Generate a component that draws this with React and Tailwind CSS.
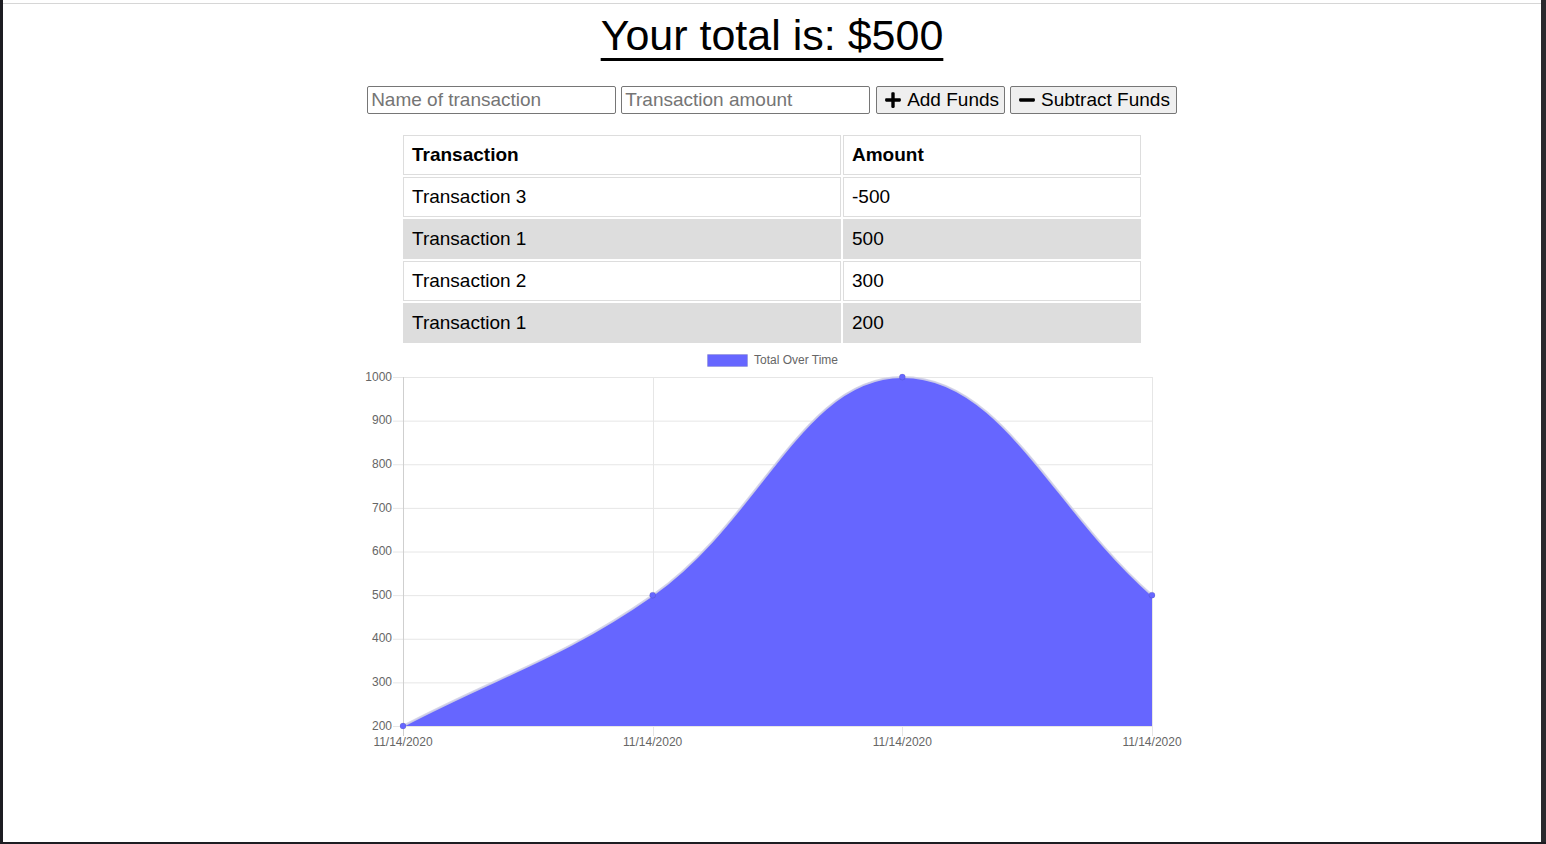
import { FaPlus, FaMinus } from 'react-icons/fa'

const font = { fontFamily: '"Liberation Sans", Arial, sans-serif' }

const transactions = [
  { name: 'Transaction 3', value: '-500' },
  { name: 'Transaction 1', value: '500' },
  { name: 'Transaction 2', value: '300' },
  { name: 'Transaction 1', value: '200' },
]

// chart geometry (svg coords)
const X0 = 48
const X1 = 797
const Y_TOP = 29
const Y_BOT = 378
const yFor = v => Y_BOT - ((v - 200) / 800) * (Y_BOT - Y_TOP)
const xFor = i => X0 + (i * (X1 - X0)) / 3

const values = [200, 500, 1000, 500]
const pts = values.map((v, i) => ({ x: xFor(i), y: yFor(v) }))

function spline(prev, cur, next, t) {
  const d01 = Math.hypot(cur.x - prev.x, cur.y - prev.y)
  const d12 = Math.hypot(next.x - cur.x, next.y - cur.y)
  let s01 = d01 / (d01 + d12)
  let s12 = d12 / (d01 + d12)
  s01 = isNaN(s01) ? 0 : s01
  s12 = isNaN(s12) ? 0 : s12
  const fa = t * s01
  const fb = t * s12
  return {
    prev: { x: cur.x - fa * (next.x - prev.x), y: cur.y - fa * (next.y - prev.y) },
    next: { x: cur.x + fb * (next.x - prev.x), y: cur.y + fb * (next.y - prev.y) },
  }
}

function curvePath() {
  const cps = pts.map((p, i) => spline(pts[i - 1] || p, p, pts[i + 1] || p, 0.4))
  let d = `M${pts[0].x},${pts[0].y}`
  for (let i = 1; i < pts.length; i++) {
    const a = cps[i - 1].next
    const b = cps[i].prev
    d += ` C${a.x},${a.y} ${b.x},${b.y} ${pts[i].x},${pts[i].y}`
  }
  return d
}

function Chart() {
  const line = curvePath()
  const ticks = [1000, 900, 800, 700, 600, 500, 400, 300, 200]
  return (
    <svg width="835" height="404" viewBox="0 0 835 404" className="block" style={font}>
      {/* legend */}
      <rect x="352.5" y="6.5" width="40" height="12" fill="#6666ff" stroke="rgba(0,0,0,0.1)" />
      <text x="399" y="12.5" fontSize="12" fill="#666" dominantBaseline="middle">Total Over Time</text>

      {/* horizontal grid */}
      {ticks.map(v => (
        <g key={v}>
          <line x1="38" x2={X1} y1={yFor(v) + 0.5} y2={yFor(v) + 0.5} stroke="#e6e6e6" />
          <text x="37" y={yFor(v) + 0.5} fontSize="12" fill="#666" textAnchor="end" dominantBaseline="middle">{v}</text>
        </g>
      ))}

      {/* vertical grid */}
      {[0, 1, 2, 3].map(i => (
        <g key={i}>
          <line
            x1={Math.round(xFor(i)) + 0.5}
            x2={Math.round(xFor(i)) + 0.5}
            y1={Y_TOP}
            y2={Y_BOT + 10}
            stroke={i === 0 ? '#cfcfcf' : '#e6e6e6'}
          />
          <text x={xFor(i)} y="395" fontSize="12" fill="#666" textAnchor="middle" dominantBaseline="middle">11/14/2020</text>
        </g>
      ))}

      {/* area */}
      <path d={`${line} L${X1},${Y_BOT} L${X0},${Y_BOT} Z`} fill="#6666ff" />
      <path d={line} fill="none" stroke="rgba(210,210,230,0.9)" strokeWidth="2" />
      {pts.map((p, i) => (
        <circle key={i} cx={p.x} cy={p.y} r="3" fill="#6666ff" stroke="rgba(0,0,0,0.1)" />
      ))}
    </svg>
  )
}

export default function App() {
  return (
    <div className="flex h-[844px] w-full flex-col overflow-hidden bg-[#1d1d22]">
      <div className="flex min-h-0 flex-1">
        <div className="w-[3px] shrink-0 bg-[#1d1d22]" />
        <div className="flex flex-1 flex-col items-center bg-white" style={font}>
          <div className="h-[3px] w-full" />
          <div className="h-px w-full bg-[#d6d6d6]" />

          <h1 className="mt-[7px] h-[48px] text-[43px] leading-[48px] text-black underline decoration-[3px] underline-offset-[8px]">
            Your total is: $500
          </h1>

          <div className="mt-[27px] flex h-[28px] items-stretch">
            <input
              placeholder="Name of transaction"
              className="w-[249px] rounded-[2px] border border-[#767676] px-[3px] text-[19px] text-black placeholder:text-[#757575]"
            />
            <input
              placeholder="Transaction amount"
              className="ml-[5px] w-[249px] rounded-[2px] border border-[#767676] px-[3px] text-[19px] text-black placeholder:text-[#757575]"
            />
            <button className="ml-[6px] inline-flex items-center gap-[5px] rounded-[2px] border border-[#767676] bg-[#efefef] pl-[7px] pr-[5px] text-[19px] text-black">
              <FaPlus size={18} />
              Add Funds
            </button>
            <button className="ml-[5px] inline-flex items-center gap-[5px] rounded-[2px] border border-[#767676] bg-[#efefef] pl-[7px] pr-[6px] text-[19px] text-black">
              <FaMinus size={18} />
              Subtract Funds
            </button>
          </div>

          <table className="mt-[19px] w-[742px] border-separate border-spacing-[2px] text-[19px] text-black">
            <thead>
              <tr>
                <th className="h-[40px] w-[438px] border border-[#dddddd] px-[8px] text-left font-bold">Transaction</th>
                <th className="h-[40px] border border-[#dddddd] px-[8px] text-left font-bold">Amount</th>
              </tr>
            </thead>
            <tbody>
              {transactions.map((t, i) => (
                <tr key={i} className={i % 2 === 1 ? 'bg-[#dddddd]' : 'bg-white'}>
                  <td className="h-[40px] border border-[#dddddd] px-[8px]">{t.name}</td>
                  <td className="h-[40px] border border-[#dddddd] px-[8px]">{t.value}</td>
                </tr>
              ))}
            </tbody>
          </table>

          <div className="mt-[3px]">
            <Chart />
          </div>
        </div>
        <div className="w-[5px] shrink-0 bg-[#2a2a2e]" />
      </div>
      <div className="h-[2px] w-full bg-[#1d1d22]" />
    </div>
  )
}
